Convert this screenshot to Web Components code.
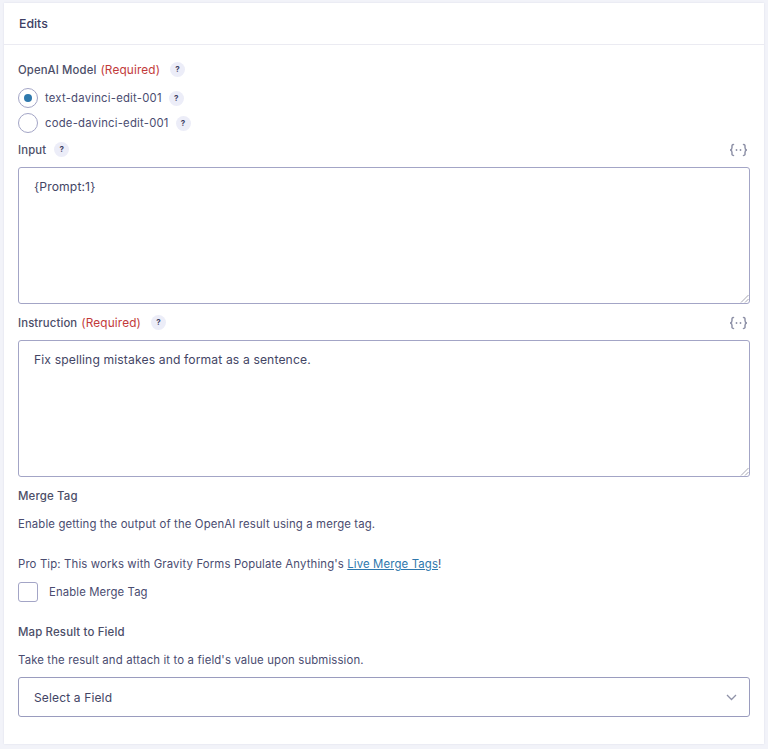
<!DOCTYPE html>
<html lang="en">
<head>
<meta charset="utf-8">
<title>Edits</title>
<style>
    html, body { margin: 0; height: 749px; overflow: hidden; background: #f2f3f9; }
    body { font-family: Inter, "Liberation Sans", sans-serif; color: #242748; padding: 3px 4px 0; box-sizing: border-box; -webkit-font-smoothing: antialiased; }
</style>
</head>
<body>
<template id="help-tpl">
    <style>
        :host { display: inline-flex; width: 15px; height: 15px; border-radius: 50%; background: #ecedf8; color: #3e4163; align-items: center; justify-content: center; font-size: 8px; font-weight: 700; line-height: 15px; flex: none; }
    </style>
    ?
</template>

<template id="card-tpl">
    <style>
        :host { display: block; width: 760px; height: 741px; box-sizing: border-box; background: #fff; box-shadow: 0 0 2px rgba(40,45,100,.1); }
        header { height: 42px; box-sizing: border-box; padding: 0 15px; display: flex; align-items: center; font-size: 12.300px; font-weight: 500; color: #3d4064; border-bottom: 1px solid #ebebf2; }
        .body { padding: 0 14px; display: flex; flex-direction: column; }
    </style>
    <header><slot name="title"></slot></header>
    <div class="body"><slot></slot></div>
</template>

<template id="label-tpl">
    <style>
        :host { display: flex; align-items: center; gap: 4px; font-size: 11.300px; font-weight: 500; color: #4c4e68; letter-spacing: .012em; }
        .req { color: #c23a3a; font-weight: 400; display: none; font-size: 11.800px; margin-right: 2px; }
        :host([required]) .req { display: inline; }
        gf-help { margin-left: 4px; }
        .tag { margin-left: auto; margin-right: 2px; display: none; }
        :host([mergetag]) .tag { display: block; }
    </style>
    <span><slot></slot></span><span class="req">(Required)</span><gf-help></gf-help>
    <svg class="tag" width="19" height="14" viewBox="0 0 19 14" fill="none" stroke="#8f92a8" stroke-width="1.500" stroke-linecap="round">
        <path d="M4.500 1.500C2.600 1.500 3 3 3 4.500S2.800 6.600 1.200 7C2.800 7.400 3 8 3 9.500s-.4 3 1.500 3"/>
        <path d="M14.500 1.500c1.900 0 1.500 1.500 1.500 3s.2 2.100 1.800 2.500C16.200 7.400 16 8 16 9.500s.4 3-1.500 3"/>
        <path d="M7.500 7h.01M11.500 7h.01" stroke-width="1.800"/>
    </svg>
</template>

<template id="radio-tpl">
    <style>
        :host { display: flex; align-items: center; height: 24.500px; font-size: 11.300px; color: #4a4c70; letter-spacing: .02em; }
        .dot { width: 20px; height: 20px; box-sizing: border-box; border: 1px solid #a3a5c6; border-radius: 50%; background: #fff; display: flex; align-items: center; justify-content: center; margin-right: 7px; flex: none; }
        :host([checked]) .dot::after { content: ""; width: 8px; height: 8px; border-radius: 50%; background: #2f79ad; }
        gf-help { margin-left: 7px; margin-top: 1px; }
    </style>
    <span class="dot"></span><span><slot></slot></span><gf-help></gf-help>
</template>

<template id="area-tpl">
    <style>
        :host { display: block; height: 137px; box-sizing: border-box; border: 1px solid #a3a5c6; border-radius: 3px; padding: 11px 15px; font-size: 12.150px; line-height: 16px; color: #434565; position: relative; letter-spacing: .01em; }
        svg { position: absolute; right: 0; bottom: 0; }
    </style>
    <slot></slot>
    <svg width="9" height="9" viewBox="0 0 9 9" stroke="#8f90a0" stroke-width=".8"><path d="M1 8.500 8.500 1M5 8.500 8.500 5"/></svg>
</template>

<template id="text-tpl">
    <style>
        :host { display: block; font-size: 11.360px; color: #4a4c70; line-height: 16px; letter-spacing: .012em; }
        :host([strong]) { font-weight: 500; font-size: 11.450px; color: #4c4e68; }
        ::slotted(a) { color: #2e78ad; text-decoration: underline; }
    </style>
    <slot></slot>
</template>

<template id="check-tpl">
    <style>
        :host { display: flex; align-items: center; gap: 11px; font-size: 11.300px; color: #4a4c70; letter-spacing: .012em; }
        .box { width: 20px; height: 20px; box-sizing: border-box; border: 1px solid #a3a5c6; border-radius: 3px; background: #fff; flex: none; }
    </style>
    <span class="box"></span><span><slot></slot></span>
</template>

<template id="select-tpl">
    <style>
        :host { display: flex; align-items: center; justify-content: space-between; height: 40px; box-sizing: border-box; border: 1px solid #9a9cbe; border-radius: 3px; padding: 0 12px 0 15px; font-size: 12px; color: #434565; letter-spacing: .012em; }
    </style>
    <span><slot></slot></span>
    <svg width="11" height="7" viewBox="0 0 11 7" fill="none" stroke="#8f92a8" stroke-width="1.300"><path d="M1 1l4.500 4.500L10 1"/></svg>
</template>

<gf-card>
    <span slot="title">Edits</span>
    <gf-label required style="margin-top:17px">OpenAI Model</gf-label>
    <gf-radio checked style="margin-top:9px">text-davinci-edit-001</gf-radio>
    <gf-radio>code-davinci-edit-001</gf-radio>
    <gf-label mergetag style="margin-top:7px;margin-bottom:10px">Input</gf-label>
    <gf-area>{Prompt:1}</gf-area>
    <gf-label required mergetag style="margin-top:11px;margin-bottom:10px">Instruction</gf-label>
    <gf-area>Fix spelling mistakes and format as a sentence.</gf-area>
    <gf-text strong style="margin-top:11px">Merge Tag</gf-text>
    <gf-text style="margin-top:12px">Enable getting the output of the OpenAI result using a merge tag.</gf-text>
    <gf-text style="margin-top:24px">Pro Tip: This works with Gravity Forms Populate Anything's <a href="#">Live Merge Tags</a>!</gf-text>
    <gf-check style="margin-top:10px">Enable Merge Tag</gf-check>
    <gf-text strong style="margin-top:22px">Map Result to Field</gf-text>
    <gf-text style="margin-top:12px">Take the result and attach it to a field's value upon submission.</gf-text>
    <gf-select style="margin-top:9px">Select a Field</gf-select>
</gf-card>

<script>
    // one small class per form part, all the same shape
    class TemplateElement extends HTMLElement {
        constructor() {
            super();
            this.shadow = this.attachShadow({ mode: 'open' });
            const tpl = document.getElementById(this.constructor.templateId);
            this.shadow.appendChild(tpl.content.cloneNode(true));
        }
    }

    const parts = {
        'gf-help': 'help-tpl',
        'gf-card': 'card-tpl',
        'gf-label': 'label-tpl',
        'gf-radio': 'radio-tpl',
        'gf-area': 'area-tpl',
        'gf-text': 'text-tpl',
        'gf-check': 'check-tpl',
        'gf-select': 'select-tpl'
    };

    Object.keys(parts).forEach(name => {
        customElements.define(name, class extends TemplateElement {
            static get templateId() { return parts[name]; }
        });
    });
</script>
</body>
</html>
